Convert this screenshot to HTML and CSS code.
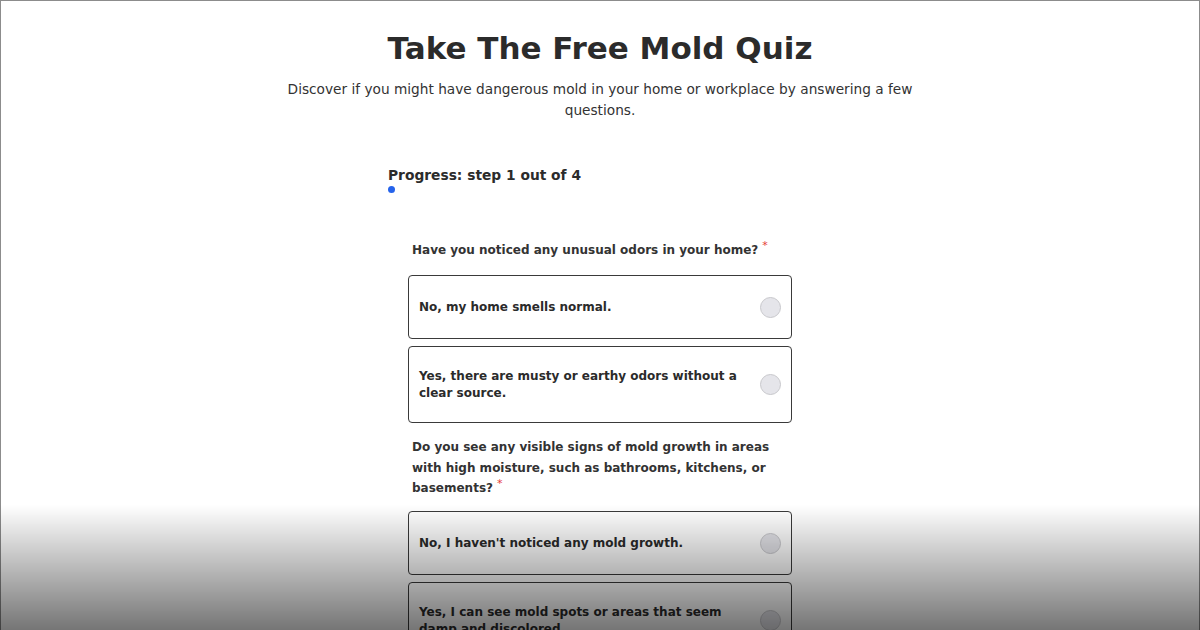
FILE: index.html
```html
<!DOCTYPE html>
<html lang="en">
  <head>
    <meta charset="UTF-8" />
    <meta name="viewport" content="width=device-width, initial-scale=1.0" />
    <title>Take The Free Mold Quiz</title>
    <link rel="stylesheet" href="styles.css">
  </head>
  <body>
    <div class="page">
      <header class="intro">
        <h1>Take The Free Mold Quiz</h1>
        <p>Discover if you might have dangerous mold in your home or workplace by answering a few questions.</p>
      </header>

      <form class="quiz">
        <div class="progress">
          <span class="progress-label">Progress: step 1 out of 4</span>
          <div class="progress-track"><div class="progress-bar" style="width: 7px"></div></div>
        </div>

        <fieldset class="question">
          <legend>Have you noticed any unusual odors in your home?<sup>*</sup></legend>
          <label class="choice">
            <span>No, my home smells normal.</span>
            <input type="radio" name="odors" value="no" />
          </label>
          <label class="choice">
            <span>Yes, there are musty or earthy odors without a clear source.</span>
            <input type="radio" name="odors" value="yes" />
          </label>
        </fieldset>

        <fieldset class="question">
          <legend>Do you see any visible signs of mold growth in areas with high moisture, such as bathrooms, kitchens, or basements?<sup>*</sup></legend>
          <label class="choice">
            <span>No, I haven't noticed any mold growth.</span>
            <input type="radio" name="growth" value="no" />
          </label>
          <label class="choice">
            <span>Yes, I can see mold spots or areas that seem damp and discolored.</span>
            <input type="radio" name="growth" value="yes" />
          </label>
        </fieldset>
      </form>
    </div>
    <!-- fade at the bottom of the frame -->
    <div class="fade"></div>
  </body>
</html>
```

FILE: styles.css
```css
html, body {
  margin: 0;
  padding: 0;
}
body {
  font-family: "DejaVu Sans", sans-serif;
  color: #333;
  background: #fff;
  height: 630px;
  overflow: hidden;
}
.page {
  border: 1px solid #8c8c8c;
  min-height: 700px;
}

.intro {
  text-align: center;
  padding-top: 27px;
}
.intro h1 {
  margin: 0;
  font-size: 31px;
  line-height: 40px;
  color: #2b2b2b;
}
.intro p {
  max-width: 640px;
  margin: 11px auto 0;
  font-size: 13.7px;
  line-height: 20.5px;
  color: #333;
}

.quiz {
  width: 424px;
  margin: 46px auto 0;
}
.progress-label {
  display: block;
  font-size: 13.8px;
  font-weight: bold;
  line-height: 18px;
  color: #2b2b2b;
}
.progress-track {
  margin-top: 2px;
  height: 7px;
}
.progress-bar {
  height: 7px;
  border-radius: 4px;
  background-color: #2563eb;
}

.question {
  border: none;
  margin: 0;
  padding: 0 20px;
}
.question:first-of-type {
  margin-top: 47px;
}
.question legend {
  padding: 0 4px;
  margin-bottom: 14.5px;
  font-size: 12px;
  font-weight: bold;
  line-height: 20.5px;
  color: #333;
}
.question legend sup {
  margin-left: 4px;
  line-height: 0;
  vertical-align: 5px;
  color: #e53935;
  font-size: 11px;
  font-weight: normal;
}
.question + .question legend {
  padding-top: 7px;
  margin-bottom: 12.5px;
}

.choice {
  display: flex;
  align-items: center;
  justify-content: space-between;
  gap: 16px;
  min-height: 63px;
  box-sizing: border-box;
  padding: 20.5px 10px;
  margin-bottom: 7px;
  border: 1px solid #3a3a3a;
  border-radius: 4px;
  font-size: 12px;
  font-weight: bold;
  line-height: 17px;
  color: #2b2b2b;
  cursor: pointer;
}
.choice input[type="radio"] {
  appearance: none;
  flex: none;
  width: 21px;
  height: 21px;
  margin: 0;
  border: 1px solid #c8c8cc;
  border-radius: 50%;
  background-color: #e5e5ea;
}

.fade {
  position: fixed;
  left: 0;
  right: 0;
  bottom: 0;
  height: 125px;
  background: linear-gradient(rgba(0, 0, 0, 0), rgba(0, 0, 0, 0.54));
  pointer-events: none;
}
```
